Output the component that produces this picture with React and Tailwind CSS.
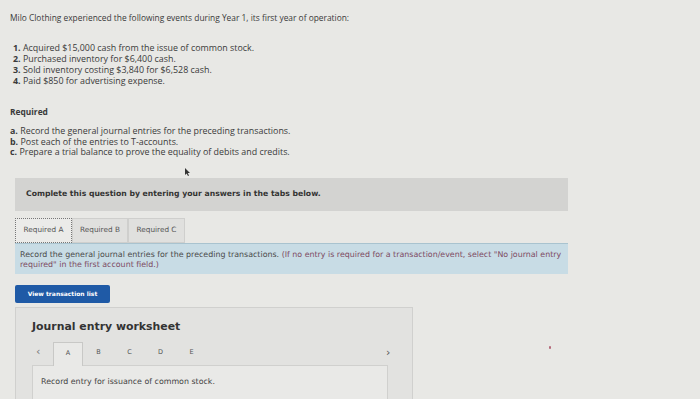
import React from 'react';

const sans = { fontFamily: '"Open Sans", "Liberation Sans", sans-serif' };
const verdana = { fontFamily: '"DejaVu Sans", Verdana, sans-serif' };

const EVENTS = [
  'Acquired $15,000 cash from the issue of common stock.',
  'Purchased inventory for $6,400 cash.',
  'Sold inventory costing $3,840 for $6,528 cash.',
  'Paid $850 for advertising expense.',
];

const REQUIRED = [
  ['a.', 'Record the general journal entries for the preceding transactions.'],
  ['b.', 'Post each of the entries to T-accounts.'],
  ['c.', 'Prepare a trial balance to prove the equality of debits and credits.'],
];

export default function App() {
  return (
    <div className="relative w-[700px] h-[399px] overflow-hidden bg-[#e8e8e5] text-[#3a3a3a]">
      {/* Question text */}
      <div style={sans} className="pl-[10px] pt-[12px] text-[8.4px] leading-[11px]">
        <p>Milo Clothing experienced the following events during Year 1, its first year of operation:</p>
        <ol className="mt-[19px] pl-[3px] text-[8.9px] leading-[11px]">
          {EVENTS.map((e, i) => (
            <li key={i} className="h-[11px]">
              <span className="font-bold">{i + 1}.</span> {e}
            </li>
          ))}
        </ol>
        <p className="mt-[20px] font-bold">Required</p>
        <ul className="mt-[9px] text-[8.9px] leading-[10.5px]">
          {REQUIRED.map(([k, t]) => (
            <li key={k} className="h-[10.5px]">
              <span className="font-bold">{k}</span> {t}
            </li>
          ))}
        </ul>
      </div>

      <div className="pl-[15px]" style={verdana}>
        {/* Banner */}
        <div className="mt-[20px] w-[553px] h-[33px] bg-[#d3d3d1] flex items-center pl-[11px]">
          <span className="text-[7.7px] font-bold text-[#333]">Complete this question by entering your answers in the tabs below.</span>
        </div>

        {/* Tabs */}
        <div className="mt-[7px] flex h-[25px] text-[7.3px] text-[#555]">
          <div className="w-[57px] flex items-center justify-center bg-[#ebebe9] border border-dotted border-[#777]">Required A</div>
          <div className="w-[56px] flex items-center justify-center bg-[#e0e0de] border border-[#cfcfcd]">Required B</div>
          <div className="w-[57px] flex items-center justify-center bg-[#e0e0de] border border-[#cfcfcd]">Required C</div>
        </div>

        {/* Instructions */}
        <div className="w-[553px] h-[31px] bg-[#c8dce5] border-t border-[#a9c3cf] pl-[5px] pr-[2px] pt-[6px] text-[7.9px] leading-[10.5px] text-[#4a4a4a]">
          Record the general journal entries for the preceding transactions.{' '}
          <span className="text-[#7d4a62]">
            (If no entry is required for a transaction/event, select "No journal entry required" in the first account field.)
          </span>
        </div>

        {/* Button */}
        <button className="mt-[11px] w-[95px] h-[18px] rounded-[2px] bg-[#1f5aa6] text-white text-[6px] font-bold flex items-center justify-center">
          View transaction list
        </button>

        {/* Worksheet */}
        <div className="mt-[4px] w-[398px] h-[120px] bg-[#e2e2e0] border border-[#d0d0ce] pl-[16px] pt-[12px]">
          <p className="text-[10.9px] font-bold text-[#333] leading-[14px]">Journal entry worksheet</p>
          <div className="mt-[7px] flex items-end h-[24px] relative">
            <span className="w-[21px] pl-[4px] self-center text-[11px] text-[#777]">‹</span>
            <div className="w-[30px] h-[24px] bg-[#e9e9e7] border border-b-0 border-[#c8c8c6] flex items-center justify-center text-[6.5px] text-[#555] relative z-10 -mb-px">A</div>
            {['B', 'C', 'D', 'E'].map((l) => (
              <div key={l} className="w-[31px] h-[24px] flex items-center justify-center text-[6.5px] text-[#555]">{l}</div>
            ))}
            <span className="absolute left-[354px] top-[4px] text-[11px] text-[#555]">›</span>
          </div>
          <div className="w-[356px] h-[60px] bg-[#e9e9e7] border border-[#d0d0ce] pl-[8px] pt-[10px] text-[7.9px] text-[#444]">
            Record entry for issuance of common stock.
          </div>
        </div>
      </div>

      {/* specks from the photo */}
      <div className="absolute left-[549px] top-[346px] w-[2px] h-[3px] rounded-full bg-[#b56a7a]" />
      <svg className="absolute left-[184px] top-[168px]" width="6" height="8" viewBox="0 0 6 8">
        <path d="M1 0 L1 7 L2.6 5.4 L4 8 L5 7.5 L3.7 5 L6 5 Z" fill="#333" />
      </svg>
    </div>
  );
}
